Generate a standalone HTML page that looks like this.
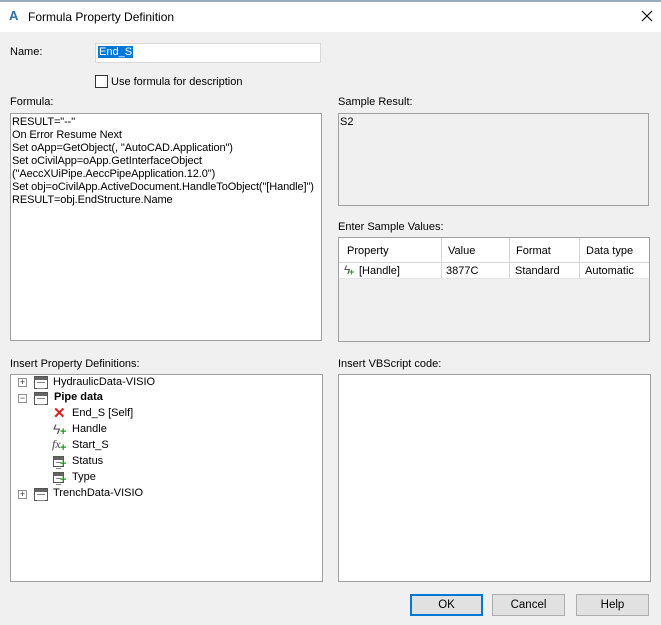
<!DOCTYPE html>
<html><head><style>
*{box-sizing:border-box;margin:0;padding:0}
body{width:661px;height:625px;background:#f0f0f0;font-family:"Liberation Sans",sans-serif;font-size:11px;color:#000;position:relative;overflow:hidden}
.a{position:absolute}
.box{position:absolute;background:#fff;border:1px solid #a0a0a0}
.btn{position:absolute;background:#e1e1e1;border:1px solid #adadad;text-align:center;line-height:20px;font-size:11.5px}
.tr{position:absolute;white-space:nowrap;font-size:11px}
.pm{position:absolute;width:9px;height:9px;border:1px solid #919191;background:#fff;font-size:9px;line-height:7px;text-align:center;color:#333}
.ic{position:absolute;width:14px;height:13px;border:1px solid #555;background:#fff}
.ic:before{content:"";position:absolute;left:0;top:0;right:0;height:3px;background:#666}
.ic:after{content:"";position:absolute;left:2px;right:2px;top:5px;height:5px;border-top:1px solid #888;border-bottom:1px solid #888}
.plus{position:absolute;color:#1a9a1a;font-weight:bold;font-size:11px}
</style></head><body>
<div class="a" style="left:0;top:0;width:661px;height:32px;background:#fff"></div>
<div class="a" style="left:0;top:0;width:661px;height:2px;background:#9ab"></div>
<div class="a" style="left:9px;top:8px;color:#2a6fb0;font-weight:bold;font-size:13px">A</div>
<div class="a" style="left:28px;top:10px;font-size:12px">Formula Property Definition</div>
<svg class="a" style="left:641px;top:10px" width="12" height="12"><path d="M1 1L11 11M11 1L1 11" stroke="#000" stroke-width="1.1"/></svg>

<div class="a" style="left:10px;top:46px">Name:</div>
<div class="box" style="left:95px;top:43px;width:226px;height:20px;border-color:#d9d9d9"><span style="position:absolute;left:2px;top:2px;background:#0078d7;color:#fff;padding:0 1px">End_S</span></div>
<div class="a" style="left:95px;top:75px;width:13px;height:13px;border:1px solid #333;background:#fff"></div>
<div class="a" style="left:111px;top:76px">Use formula for description</div>

<div class="a" style="left:10px;top:96px">Formula:</div>
<div class="box" style="left:10px;top:113px;width:312px;height:228px;line-height:13px;padding:2px 1px;letter-spacing:-0.1px">
RESULT="--"<br>On Error Resume Next<br>Set oApp=GetObject(, "AutoCAD.Application")<br>Set oCivilApp=oApp.GetInterfaceObject<br>("AeccXUiPipe.AeccPipeApplication.12.0")<br>Set obj=oCivilApp.ActiveDocument.HandleToObject("[Handle]")<br>RESULT=obj.EndStructure.Name</div>

<div class="a" style="left:338px;top:96px">Sample Result:</div>
<div class="box" style="left:338px;top:113px;width:311px;height:93px;background:#f0f0f0;padding:2px 1px">S2</div>

<div class="a" style="left:338px;top:221px">Enter Sample Values:</div>
<div class="box" style="left:338px;top:237px;width:312px;height:105px;background:#f0f0f0">
 <div class="a" style="left:0;top:0;width:310px;height:25px;background:#fff;border-bottom:1px solid #d5d5d5"></div>
 <div class="a" style="left:0;top:25px;width:310px;height:16px;background:#fff;border-bottom:1px solid #e5e5e5"></div>
 <div class="a" style="left:102px;top:0;width:1px;height:41px;background:#d5d5d5"></div>
 <div class="a" style="left:170px;top:0;width:1px;height:41px;background:#d5d5d5"></div>
 <div class="a" style="left:240px;top:0;width:1px;height:41px;background:#d5d5d5"></div>
 <div class="a" style="left:8px;top:7px">Property</div>
 <div class="a" style="left:109px;top:7px">Value</div>
 <div class="a" style="left:177px;top:7px">Format</div>
 <div class="a" style="left:247px;top:7px">Data type</div>
 <div class="a" style="left:5px;top:25px;font-size:12px;color:#555">ϟ</div><div class="plus" style="left:10px;top:29px;font-size:9px">+</div>
 <div class="a" style="left:20px;top:27px">[Handle]</div>
 <div class="a" style="left:107px;top:27px">3877C</div>
 <div class="a" style="left:176px;top:27px">Standard</div>
 <div class="a" style="left:246px;top:27px">Automatic</div>
</div>

<div class="a" style="left:10px;top:358px">Insert Property Definitions:</div>
<div class="box" style="left:10px;top:374px;width:313px;height:208px"></div>
<div class="pm" style="left:18px;top:378px">+</div><div class="ic" style="left:34px;top:376px"></div><div class="tr" style="left:53px;top:376px">HydraulicData-VISIO</div>
<div class="pm" style="left:18px;top:394px">−</div><div class="ic" style="left:34px;top:392px"></div><div class="tr" style="left:54px;top:391px;font-weight:bold">Pipe data</div>
<div class="a" style="left:53px;top:404px;color:#e02020;font-size:15px;font-weight:bold">✕</div><div class="tr" style="left:72px;top:407px">End_S [Self]</div>
<div class="a" style="left:53px;top:421px;font-size:14px;color:#555">ϟ</div><div class="plus" style="left:60px;top:426px">+</div><div class="tr" style="left:72px;top:423px">Handle</div>
<div class="a" style="left:52px;top:437px;font-style:italic;font-family:'Liberation Serif',serif;font-size:12px;color:#444">fx</div><div class="plus" style="left:60px;top:442px">+</div><div class="tr" style="left:72px;top:439px">Start_S</div>
<div class="ic" style="left:53px;top:456px;width:11px;height:11px"></div><div class="plus" style="left:60px;top:458px">+</div><div class="tr" style="left:72px;top:455px">Status</div>
<div class="ic" style="left:53px;top:472px;width:11px;height:11px"></div><div class="plus" style="left:60px;top:474px">+</div><div class="tr" style="left:72px;top:471px">Type</div>
<div class="pm" style="left:18px;top:490px">+</div><div class="ic" style="left:34px;top:488px"></div><div class="tr" style="left:53px;top:487px">TrenchData-VISIO</div>

<div class="a" style="left:338px;top:358px">Insert VBScript code:</div>
<div class="box" style="left:338px;top:374px;width:313px;height:208px"></div>

<div class="btn" style="left:410px;top:594px;width:73px;height:22px;border:2px solid #0078d7;line-height:18px">OK</div>
<div class="btn" style="left:492px;top:594px;width:73px;height:22px">Cancel</div>
<div class="btn" style="left:576px;top:594px;width:73px;height:22px">Help</div>
</body></html>
